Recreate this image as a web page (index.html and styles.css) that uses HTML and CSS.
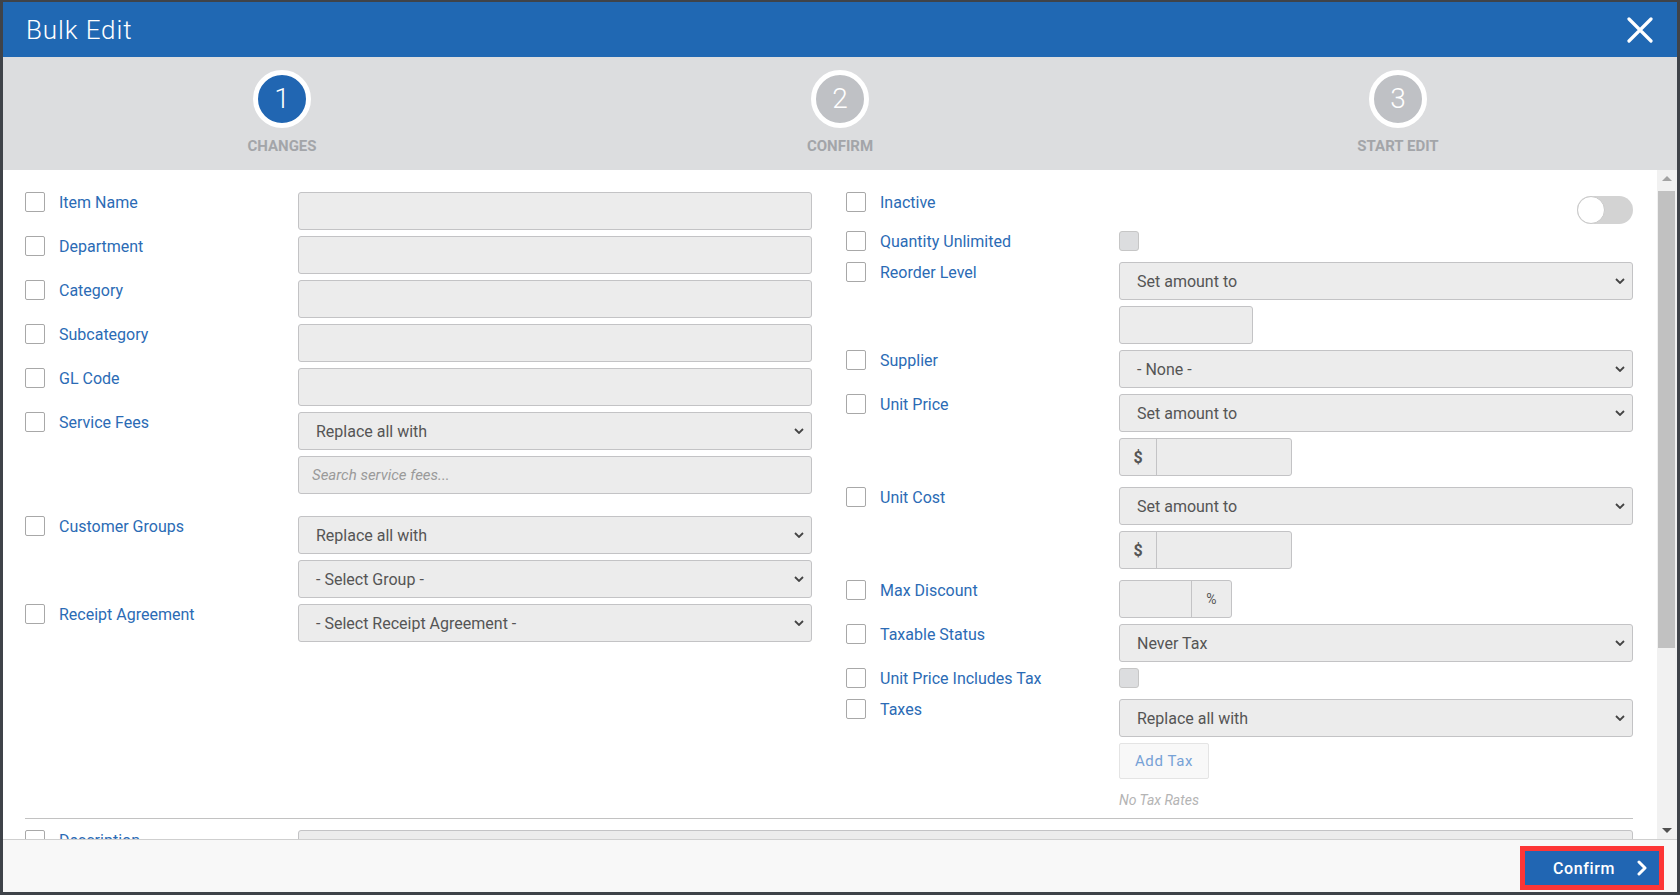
FILE: index.html
```html
<!DOCTYPE html>
<html lang="en">
<head>
<meta charset="utf-8">
<title>Bulk Edit</title>
<link rel="stylesheet" href="styles.css">
</head>
<body>
<div class="modal">
  <header class="modal-header">
    <h1 class="title">Bulk Edit</h1>
    <button class="close" type="button" aria-label="Close">
      <svg width="26" height="26" viewBox="0 0 26 26"><path d="M2 2 L24 24 M24 2 L2 24" stroke="#fff" stroke-width="3.2" stroke-linecap="round" fill="none"/></svg>
    </button>
  </header>

  <div class="stepper">
    <div class="step active"><div class="step-circle">1</div><div class="step-label">CHANGES</div></div>
    <div class="step"><div class="step-circle">2</div><div class="step-label">CONFIRM</div></div>
    <div class="step"><div class="step-circle">3</div><div class="step-label">START EDIT</div></div>
  </div>

  <div class="modal-body">
    <div class="body-scroll">
      <div class="columns">
        <div class="col">
          <div class="row"><span class="cb"></span><span class="lbl">Item Name</span><div class="ctrl"><input class="field" type="text"></div></div>
          <div class="row"><span class="cb"></span><span class="lbl">Department</span><div class="ctrl"><input class="field" type="text"></div></div>
          <div class="row"><span class="cb"></span><span class="lbl">Category</span><div class="ctrl"><input class="field" type="text"></div></div>
          <div class="row"><span class="cb"></span><span class="lbl">Subcategory</span><div class="ctrl"><input class="field" type="text"></div></div>
          <div class="row"><span class="cb"></span><span class="lbl">GL Code</span><div class="ctrl"><input class="field" type="text"></div></div>
          <div class="row row-xl"><span class="cb"></span><span class="lbl">Service Fees</span>
            <div class="ctrl">
              <div class="field select"><span>Replace all with</span><svg class="chev" width="10" height="6" viewBox="0 0 10 6"><path d="M1 1 L5 5 L9 1" stroke="#444" stroke-width="1.8" fill="none"/></svg></div>
              <input class="field search" type="text" placeholder="Search service fees...">
            </div>
          </div>
          <div class="row"><span class="cb"></span><span class="lbl">Customer Groups</span>
            <div class="ctrl">
              <div class="field select"><span>Replace all with</span><svg class="chev" width="10" height="6" viewBox="0 0 10 6"><path d="M1 1 L5 5 L9 1" stroke="#444" stroke-width="1.8" fill="none"/></svg></div>
              <div class="field select"><span>- Select Group -</span><svg class="chev" width="10" height="6" viewBox="0 0 10 6"><path d="M1 1 L5 5 L9 1" stroke="#444" stroke-width="1.8" fill="none"/></svg></div>
            </div>
          </div>
          <div class="row"><span class="cb"></span><span class="lbl">Receipt Agreement</span>
            <div class="ctrl">
              <div class="field select"><span>- Select Receipt Agreement -</span><svg class="chev" width="10" height="6" viewBox="0 0 10 6"><path d="M1 1 L5 5 L9 1" stroke="#444" stroke-width="1.8" fill="none"/></svg></div>
            </div>
          </div>
        </div>

        <div class="col">
          <div class="row"><span class="cb"></span><span class="lbl">Inactive</span>
            <div class="ctrl ctrl-end"><div class="toggle"><span class="knob"></span></div></div>
          </div>
          <div class="row"><span class="cb"></span><span class="lbl">Quantity Unlimited</span>
            <div class="ctrl ctrl-check"><span class="cb-disabled"></span></div>
          </div>
          <div class="row"><span class="cb"></span><span class="lbl">Reorder Level</span>
            <div class="ctrl">
              <div class="field select"><span>Set amount to</span><svg class="chev" width="10" height="6" viewBox="0 0 10 6"><path d="M1 1 L5 5 L9 1" stroke="#444" stroke-width="1.8" fill="none"/></svg></div>
              <input class="field small" type="text">
            </div>
          </div>
          <div class="row"><span class="cb"></span><span class="lbl">Supplier</span>
            <div class="ctrl">
              <div class="field select"><span>- None -</span><svg class="chev" width="10" height="6" viewBox="0 0 10 6"><path d="M1 1 L5 5 L9 1" stroke="#444" stroke-width="1.8" fill="none"/></svg></div>
            </div>
          </div>
          <div class="row row-lg"><span class="cb"></span><span class="lbl">Unit Price</span>
            <div class="ctrl">
              <div class="field select"><span>Set amount to</span><svg class="chev" width="10" height="6" viewBox="0 0 10 6"><path d="M1 1 L5 5 L9 1" stroke="#444" stroke-width="1.8" fill="none"/></svg></div>
              <div class="input-group money"><span class="addon addon-left">$</span><input class="group-input" type="text"></div>
            </div>
          </div>
          <div class="row row-lg"><span class="cb"></span><span class="lbl">Unit Cost</span>
            <div class="ctrl">
              <div class="field select"><span>Set amount to</span><svg class="chev" width="10" height="6" viewBox="0 0 10 6"><path d="M1 1 L5 5 L9 1" stroke="#444" stroke-width="1.8" fill="none"/></svg></div>
              <div class="input-group money"><span class="addon addon-left">$</span><input class="group-input" type="text"></div>
            </div>
          </div>
          <div class="row"><span class="cb"></span><span class="lbl">Max Discount</span>
            <div class="ctrl">
              <div class="input-group percent"><input class="group-input" type="text"><span class="addon addon-right">%</span></div>
            </div>
          </div>
          <div class="row"><span class="cb"></span><span class="lbl">Taxable Status</span>
            <div class="ctrl">
              <div class="field select"><span>Never Tax</span><svg class="chev" width="10" height="6" viewBox="0 0 10 6"><path d="M1 1 L5 5 L9 1" stroke="#444" stroke-width="1.8" fill="none"/></svg></div>
            </div>
          </div>
          <div class="row"><span class="cb"></span><span class="lbl">Unit Price Includes Tax</span>
            <div class="ctrl ctrl-check"><span class="cb-disabled"></span></div>
          </div>
          <div class="row"><span class="cb"></span><span class="lbl">Taxes</span>
            <div class="ctrl">
              <div class="field select"><span>Replace all with</span><svg class="chev" width="10" height="6" viewBox="0 0 10 6"><path d="M1 1 L5 5 L9 1" stroke="#444" stroke-width="1.8" fill="none"/></svg></div>
              <button class="btn-add" type="button">Add Tax</button>
              <div class="empty-note">No Tax Rates</div>
            </div>
          </div>
        </div>
      </div>

      <hr class="divider">

      <div class="row"><span class="cb"></span><span class="lbl">Description</span>
        <div class="ctrl"><textarea class="field textarea"></textarea></div>
      </div>
    </div>

    <div class="scrollbar">
      <div class="sb-btn"><span class="tri-up"></span></div>
      <div class="sb-track"><div class="sb-thumb"></div></div>
      <div class="sb-btn"><span class="tri-down"></span></div>
    </div>
  </div>

  <footer class="modal-footer">
    <button class="btn-confirm" type="button">
      <span>Confirm</span>
      <svg width="12" height="16" viewBox="0 0 12 16"><path d="M3 2 L9 8 L3 14" stroke="#fff" stroke-width="3" fill="none" stroke-linecap="round" stroke-linejoin="round"/></svg>
    </button>
  </footer>
</div>
</body>
</html>
```

FILE: styles.css
```css
* { box-sizing: border-box; }

html, body {
  margin: 0;
  padding: 0;
  height: 100%;
}

body {
  background: #3f4349;
  font-family: Roboto, "Liberation Sans", Arial, sans-serif;
  overflow: hidden;
}

.modal {
  margin: 2px 3px 0 3px;
  height: 890px;
  background: #fff;
  display: flex;
  flex-direction: column;
}

/* Header */
.modal-header {
  height: 55px;
  flex: none;
  background: #2068b3;
  display: flex;
  align-items: center;
  justify-content: space-between;
  padding: 0 24px 0 23px;
}

.title {
  margin: 0;
  font-size: 26px;
  font-weight: 300;
  letter-spacing: 0.9px;
  color: #fff;
  line-height: 30px;
}

.close {
  border: 0;
  background: transparent;
  padding: 0;
  width: 26px;
  height: 26px;
  display: flex;
  align-items: center;
  justify-content: center;
  cursor: pointer;
}

/* Stepper */
.stepper {
  height: 113px;
  flex: none;
  background: #dcdddf;
  display: grid;
  grid-template-columns: 1fr 1fr 1fr;
}

.step {
  display: flex;
  flex-direction: column;
  align-items: center;
  padding-top: 13px;
}

.step-circle {
  width: 58px;
  height: 58px;
  border-radius: 50%;
  border: 5px solid #fff;
  background: #bfc1c5;
  color: #fff;
  font-size: 28px;
  font-weight: 300;
  display: flex;
  align-items: center;
  justify-content: center;
  line-height: 1;
}

.step.active .step-circle {
  background: #2166b2;
}

.step-label {
  margin-top: 9px;
  font-size: 15px;
  font-weight: 700;
  line-height: 18px;
  color: #a3a5a9;
}

/* Body */
.modal-body {
  flex: 1;
  display: flex;
  min-height: 0;
}

.body-scroll {
  flex: 1;
  overflow: hidden;
  padding: 22px 24px 0 22px;
}

.columns {
  display: grid;
  grid-template-columns: 787px 787px;
  column-gap: 34px;
  align-items: start;
}

.col {
  display: flex;
  flex-direction: column;
}

.row {
  display: flex;
  align-items: flex-start;
  margin-bottom: 6px;
}

.row-lg { margin-bottom: 11px; }
.row-xl { margin-bottom: 22px; }

.cb {
  flex: none;
  width: 20px;
  height: 20px;
  border: 1px solid #a8a8a8;
  border-radius: 2px;
  background: #fff;
  margin-right: 14px;
}

.lbl {
  flex: none;
  width: 239px;
  font-size: 16px;
  line-height: 20px;
  padding-top: 1px;
  color: #2b6bb5;
}

.ctrl {
  flex: 1;
  min-width: 0;
  display: flex;
  flex-direction: column;
  align-items: stretch;
  gap: 6px;
}

.ctrl-end {
  align-items: flex-end;
  padding-top: 4px;
  padding-bottom: 1px;
}

.ctrl-check {
  height: 25px;
  align-items: flex-start;
}

.field {
  height: 38px;
  border: 1px solid #c3c3c5;
  border-radius: 3px;
  background: #ececec;
  font-family: inherit;
  font-size: 16px;
  color: #555;
  margin: 0;
  outline: none;
}

input.field {
  padding: 0 13px;
  width: 100%;
}

.search {
  font-size: 15px;
}

.search::placeholder {
  color: #9a9a9a;
  font-style: italic;
}

.small {
  align-self: flex-start;
  width: 134px !important;
}

.select {
  display: flex;
  align-items: center;
  justify-content: space-between;
  padding: 0 7px 0 17px;
}

.chev {
  flex: none;
}

.textarea {
  width: 100%;
  height: 80px;
  resize: none;
  display: block;
}

/* Input groups */
.input-group {
  display: flex;
  height: 38px;
  align-self: flex-start;
  border: 1px solid #c3c3c5;
  border-radius: 3px;
  background: #ececec;
  overflow: hidden;
}

.money { width: 173px; }
.percent { width: 113px; }

.addon {
  flex: none;
  display: flex;
  align-items: center;
  justify-content: center;
  color: #555;
}

.addon-left {
  width: 37px;
  border-right: 1px solid #c3c3c5;
  font-weight: 700;
  font-size: 16px;
}

.addon-right {
  width: 40px;
  border-left: 1px solid #c3c3c5;
  font-size: 14px;
}

.group-input {
  flex: 1;
  min-width: 0;
  border: 0;
  background: transparent;
  outline: none;
  font-family: inherit;
  font-size: 16px;
  padding: 0 10px;
}

/* Toggle */
.toggle {
  width: 56px;
  height: 28px;
  border-radius: 14px;
  background: #d3d3d3;
  display: flex;
  align-items: center;
}

.knob {
  width: 28px;
  height: 28px;
  border-radius: 50%;
  background: #fff;
  border: 1px solid #c9c9c9;
}

.cb-disabled {
  width: 20px;
  height: 20px;
  border: 1px solid #c6c6c6;
  border-radius: 3px;
  background: #dcdddf;
}

.btn-add {
  align-self: flex-start;
  width: 90px;
  height: 36px;
  border: 1px solid #e4e4e4;
  border-radius: 2px;
  background: #f8f8f8;
  color: #76a1d6;
  font-family: inherit;
  font-size: 15px;
  letter-spacing: 0.6px;
  padding: 0;
}

.empty-note {
  margin-top: 5px;
  font-size: 14px;
  line-height: 20px;
  font-style: italic;
  color: #b4b4b4;
}

.divider {
  border: 0;
  border-top: 1px solid #c2c2c2;
  margin: 2px 0 11px 0;
  height: 0;
}

/* Scrollbar */
.scrollbar {
  flex: none;
  width: 20px;
  background: #f1f1f1;
  display: flex;
  flex-direction: column;
}

.sb-btn {
  height: 17px;
  flex: none;
  display: flex;
  align-items: center;
  justify-content: center;
}

.tri-up {
  width: 0;
  height: 0;
  border-left: 5px solid transparent;
  border-right: 5px solid transparent;
  border-bottom: 5px solid #a3a3a3;
}

.tri-down {
  width: 0;
  height: 0;
  border-left: 5px solid transparent;
  border-right: 5px solid transparent;
  border-top: 5px solid #505050;
}

.sb-track {
  flex: 1;
  padding: 4px 2px 0 1px;
}

.sb-thumb {
  height: 457px;
  background: #c1c1c1;
}

/* Footer */
.modal-footer {
  height: 53px;
  flex: none;
  background: #f8f8f8;
  border-top: 1px solid #cfcfcf;
  display: flex;
  justify-content: flex-end;
  align-items: flex-start;
  padding: 6px 13px 0 0;
}

.btn-confirm {
  width: 144px;
  height: 44px;
  border: 5px solid #fd3636;
  background: #2166b3;
  color: #fff;
  font-family: inherit;
  font-size: 16px;
  font-weight: 500;
  letter-spacing: 0.6px;
  display: flex;
  align-items: center;
  padding: 0 0 0 28px;
  gap: 21px;
}
```
